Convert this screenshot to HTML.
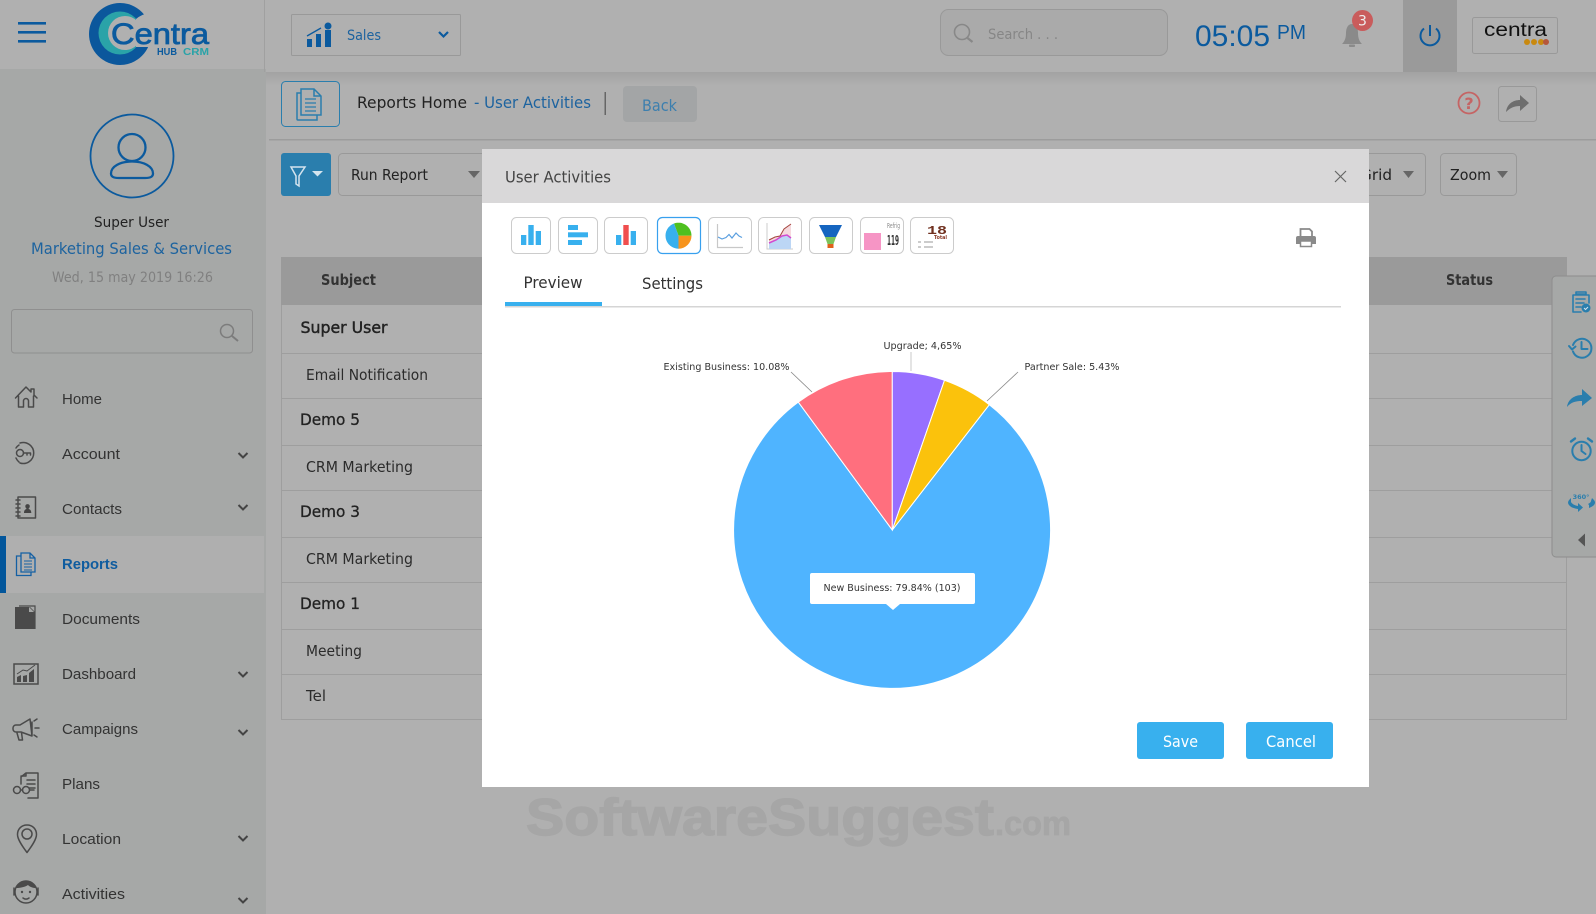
<!DOCTYPE html>
<html lang="en"><head><meta charset="utf-8"><title>Reports - User Activities</title>
<style>
html,body{margin:0;padding:0;background:#b0b0b0;overflow:hidden;width:1596px;height:914px}
svg{display:block}
text{font-family:"DejaVu Sans","Liberation Sans",sans-serif;fill:#2b2b2b}
.m{font-family:"Liberation Sans",sans-serif;font-size:15px;fill:#333}
.ic{fill:none;stroke:#4a4a4a;stroke-width:1.5;stroke-linecap:round;stroke-linejoin:round}
.bl{fill:none;stroke:#2a7ead;stroke-width:2;stroke-linecap:round;stroke-linejoin:round}
.cb{fill:#fff;stroke:#ccc;stroke-width:1}
.lab{font-size:10px;fill:#333}
</style></head>
<body>
<svg width="1596" height="914" viewBox="0 0 1596 914" xmlns="http://www.w3.org/2000/svg">
<defs>
<linearGradient id="sh" x1="0" y1="0" x2="0" y2="1"><stop offset="0" stop-color="#a2a2a2"/><stop offset="1" stop-color="#b0b0b0"/></linearGradient>
</defs>
<rect width="1596" height="914" fill="#b0b0b0"/>

<!-- sidebar -->
<rect x="0" y="69" width="266" height="845" fill="#a6a8a7"/>
<rect x="0" y="0" width="264" height="69" fill="#b0b0b0"/>
<rect x="264" y="0" width="1" height="72" fill="#a0a0a0"/>

<!-- top bar shadow -->
<rect x="266" y="72" width="1330" height="14" fill="url(#sh)"/>

<!-- hamburger -->
<g fill="#0b5a9e"><rect x="18" y="22" width="28" height="2.6"/><rect x="18" y="31" width="28" height="2.6"/><rect x="18" y="40" width="28" height="2.6"/></g>

<!-- logo -->
<circle cx="120" cy="34" r="31" fill="#0b579c"/>
<circle cx="120" cy="33" r="21.5" fill="#2aa3a8"/>
<circle cx="125" cy="33" r="17" fill="#b0b0b0"/>
<path d="M136 19Q142 14 148 13.500Q152 12 156 16L215 18V47H150L136 47z" fill="#b0b0b0"/>
<text x="111" y="44" font-size="30" textLength="98" lengthAdjust="spacingAndGlyphs" style="font-family:'Liberation Sans',sans-serif;fill:#0b5a9e;stroke:#0b5a9e;stroke-width:.8">Centra</text>
<text x="157" y="55" font-size="10" textLength="20" lengthAdjust="spacingAndGlyphs" style="font-family:'Liberation Sans',sans-serif;font-weight:bold;fill:#0b5a9e">HUB</text>
<text x="183" y="55" font-size="10" textLength="26" lengthAdjust="spacingAndGlyphs" style="font-family:'Liberation Sans',sans-serif;font-weight:bold;fill:#2aa3a8">CRM</text>

<!-- sales select -->
<rect x="291.500" y="14.500" width="169" height="41" rx="1" fill="none" stroke="#999"/>
<g fill="#0b5a9e"><rect x="307" y="39" width="5" height="8"/><rect x="316" y="34" width="5" height="13"/><rect x="325" y="30" width="6" height="17"/><circle cx="328" cy="26" r="3.500"/></g>
<path d="M307 36l14-8" fill="none" stroke="#0b5a9e" stroke-width="1.300"/>
<text x="347" y="40" font-size="14" textLength="34" lengthAdjust="spacingAndGlyphs" style="fill:#1d639f">Sales</text>
<path d="M439 32l4.500 4.500 4.500-4.500" fill="none" stroke="#0b5a9e" stroke-width="2.200"/>

<!-- search -->
<rect x="940.500" y="9.500" width="227" height="46" rx="8" fill="#aaa" stroke="#999"/>
<circle cx="962" cy="32" r="7.500" fill="none" stroke="#888" stroke-width="1.600"/>
<path d="M967.500 38l5 4" stroke="#888" stroke-width="2.200"/>
<text x="988" y="39" font-size="14" textLength="70" lengthAdjust="spacingAndGlyphs" style="fill:#868686">Search . . .</text>

<!-- clock -->
<text x="1195" y="46" font-size="30" textLength="75" lengthAdjust="spacingAndGlyphs" style="fill:#0b5a9e;font-family:'Liberation Sans',sans-serif">05:05</text>
<text x="1277" y="39" font-size="20" textLength="29" lengthAdjust="spacingAndGlyphs" style="fill:#0b5a9e;font-family:'Liberation Sans',sans-serif">PM</text>

<!-- bell -->
<path d="M1352 24c4 0 6 4 6 9 0 6 2 9 4 11h-20c2-2 4-5 4-11 0-5 2-9 6-9z" fill="#8a8a8a"/>
<rect x="1349" y="44.500" width="6" height="2.500" rx="1" fill="#8a8a8a"/>
<circle cx="1362.500" cy="20.500" r="10.500" fill="#c95c5c"/>
<text x="1362.500" y="25.500" font-size="14" text-anchor="middle" style="fill:#eee">3</text>

<!-- power -->
<rect x="1403" y="0" width="54" height="72" fill="#9a9a9a"/>
<path d="M1424 28.500a9.500 9.500 0 1 0 12 0" fill="none" stroke="#0b5a9e" stroke-width="2"/>
<path d="M1430 25v11" stroke="#0b5a9e" stroke-width="2"/>

<!-- centra box -->
<rect x="1472.500" y="17.500" width="85" height="36" rx="2" fill="#b0b0b0" stroke="#999"/>
<text x="1484" y="36" font-size="19" textLength="63" lengthAdjust="spacingAndGlyphs" style="fill:#111;font-family:'Liberation Sans',sans-serif">centra</text>
<g fill="#c9890f"><circle cx="1527" cy="42" r="3"/><circle cx="1534" cy="42" r="3"/><circle cx="1541" cy="42" r="3"/></g><circle cx="1546" cy="42" r="3" fill="#b5573c"/>

<!-- breadcrumb row -->
<rect x="281.500" y="81.500" width="58" height="45" rx="4" fill="#b0b0b0" stroke="#2a7ead"/>
<path d="M301 89h13l7 7v19h-20zM314 89v7h7" fill="none" stroke="#2a7ead" stroke-width="1.500"/>
<path d="M301 93h-4v26a1 1 0 0 0 1 1h19v-5" fill="none" stroke="#2a7ead" stroke-width="1.500"/>
<path d="M305 99h11M305 103h11M305 107h11M305 111h11" stroke="#2a7ead" stroke-width="1.300"/>
<text x="357" y="108" font-size="16" textLength="110" lengthAdjust="spacingAndGlyphs" style="fill:#222">Reports Home</text>
<text x="474" y="108" font-size="16" textLength="117" lengthAdjust="spacingAndGlyphs" style="fill:#1d639f">- User Activities</text>
<rect x="604.500" y="92" width="1.500" height="23" fill="#666"/>
<rect x="623" y="86" width="74" height="36" rx="4" fill="#a3a5a6"/>
<text x="642" y="111" font-size="16" textLength="35" lengthAdjust="spacingAndGlyphs" style="fill:#3d7fae">Back</text>

<circle cx="1469" cy="103" r="10.500" fill="none" stroke="#c56464" stroke-width="1.800"/>
<text x="1469" y="109" font-size="16" font-weight="bold" text-anchor="middle" style="fill:#c56464">?</text>
<rect x="1498.500" y="86.500" width="38" height="35" rx="3" fill="#b0b0b0" stroke="#999"/>
<path d="M1506 112c1-8 7-12 14-12v-5l9 8-9 8v-5c-6 0-10 2-14 6z" fill="#6e6e6e"/>

<rect x="269" y="139" width="1327" height="1.500" fill="#9c9c9c"/>

<!-- toolbar -->
<rect x="281" y="153" width="50" height="43" rx="3" fill="#2a7ead"/>
<path d="M291 167h14l-6 9v10l-3-2v-8z" fill="none" stroke="#d4e4ee" stroke-width="1.500"/>
<path d="M312 171h11l-5.500 5.500z" fill="#d4e4ee"/>
<rect x="338.500" y="153.500" width="160" height="42" rx="4" fill="#b0b0b0" stroke="#999"/>
<text x="351" y="180" font-size="15" textLength="77" lengthAdjust="spacingAndGlyphs" style="fill:#222">Run Report</text>
<path d="M468 171h12l-6 7z" fill="#666"/>
<rect x="1340.500" y="153.500" width="85" height="42" rx="4" fill="#b0b0b0" stroke="#999"/>
<text x="1360" y="180" font-size="15" textLength="32" lengthAdjust="spacingAndGlyphs" style="fill:#222">Grid</text>
<path d="M1403 171h11l-5.500 7z" fill="#666"/>
<rect x="1440.500" y="153.500" width="76" height="42" rx="4" fill="#b0b0b0" stroke="#999"/>
<text x="1450" y="180" font-size="15" textLength="41" lengthAdjust="spacingAndGlyphs" style="fill:#222">Zoom</text>
<path d="M1497 171h11l-5.500 7z" fill="#666"/>

<!-- table -->
<rect x="281" y="257" width="1286" height="48" fill="#9a9a9a"/>
<text x="321" y="285" font-size="15" font-weight="bold" textLength="55" lengthAdjust="spacingAndGlyphs" style="fill:#333">Subject</text>
<text x="1446" y="285" font-size="15" font-weight="bold" textLength="47" lengthAdjust="spacingAndGlyphs" style="fill:#333">Status</text>
<g fill="#9e9e9e">
<rect x="281" y="353" width="1286" height="1"/><rect x="281" y="398" width="1286" height="1"/><rect x="281" y="445" width="1286" height="1"/><rect x="281" y="490" width="1286" height="1"/><rect x="281" y="537" width="1286" height="1"/><rect x="281" y="582" width="1286" height="1"/><rect x="281" y="629" width="1286" height="1"/><rect x="281" y="674" width="1286" height="1"/><rect x="281" y="719" width="1286" height="1"/>
<rect x="281" y="305" width="1" height="414"/><rect x="1566" y="305" width="1" height="414"/>
</g>
<text x="300.500" y="333" font-size="16" textLength="87" lengthAdjust="spacingAndGlyphs" style="fill:#222;stroke:#222;stroke-width:.45">Super User</text>
<text x="306" y="380" font-size="15" textLength="122" lengthAdjust="spacingAndGlyphs">Email Notification</text>
<text x="300" y="425" font-size="16" textLength="60" lengthAdjust="spacingAndGlyphs" style="fill:#222;stroke:#222;stroke-width:.3">Demo 5</text>
<text x="306" y="472" font-size="15" textLength="107" lengthAdjust="spacingAndGlyphs">CRM Marketing</text>
<text x="300" y="517" font-size="16" textLength="60" lengthAdjust="spacingAndGlyphs" style="fill:#222;stroke:#222;stroke-width:.3">Demo 3</text>
<text x="306" y="564" font-size="15" textLength="107" lengthAdjust="spacingAndGlyphs">CRM Marketing</text>
<text x="300" y="609" font-size="16" textLength="60" lengthAdjust="spacingAndGlyphs" style="fill:#222;stroke:#222;stroke-width:.3">Demo 1</text>
<text x="306" y="656" font-size="15" textLength="56" lengthAdjust="spacingAndGlyphs">Meeting</text>
<text x="306" y="701" font-size="15" textLength="20" lengthAdjust="spacingAndGlyphs">Tel</text>

<!-- user block -->
<circle cx="132" cy="156" r="41.500" fill="none" stroke="#0b5a9e" stroke-width="1.800"/>
<circle cx="132" cy="147.500" r="13.500" fill="none" stroke="#0b5a9e" stroke-width="2.300"/>
<path d="M132 161.500c-12 0-21 5-21 12 0 4 4 4.500 8 4.500h26c4 0 8-.5 8-4.500 0-7-9-12-21-12z" fill="none" stroke="#0b5a9e" stroke-width="2.300"/>
<text x="94" y="227" font-size="14.500" textLength="75" lengthAdjust="spacingAndGlyphs" style="fill:#222">Super User</text>
<text x="31" y="254" font-size="16" textLength="201" lengthAdjust="spacingAndGlyphs" style="fill:#1d639f">Marketing Sales &amp; Services</text>
<text x="52" y="282" font-size="14" textLength="161" lengthAdjust="spacingAndGlyphs" style="fill:#808080">Wed, 15 may 2019 16:26</text>
<rect x="11.500" y="309.500" width="241" height="43.500" rx="3" fill="#a6a8a7" stroke="#8f8f8f"/>
<circle cx="227" cy="331" r="6.500" fill="none" stroke="#7c7c7c" stroke-width="1.500"/>
<path d="M232 336l6 5" stroke="#7c7c7c" stroke-width="2"/>

<!-- menu -->
<rect x="0" y="536" width="264" height="57" fill="#afafaf"/>
<rect x="0" y="536" width="6" height="57" fill="#02569b"/>
<text class="m" x="62" y="404" textLength="40" lengthAdjust="spacingAndGlyphs">Home</text>
<text class="m" x="62" y="459" textLength="58" lengthAdjust="spacingAndGlyphs">Account</text>
<text class="m" x="62" y="514" textLength="60" lengthAdjust="spacingAndGlyphs">Contacts</text>
<text class="m" x="62" y="569" textLength="56" lengthAdjust="spacingAndGlyphs" style="font-weight:bold;fill:#0f5c9f">Reports</text>
<text class="m" x="62" y="624" textLength="78" lengthAdjust="spacingAndGlyphs">Documents</text>
<text class="m" x="62" y="679" textLength="74" lengthAdjust="spacingAndGlyphs">Dashboard</text>
<text class="m" x="62" y="734" textLength="76" lengthAdjust="spacingAndGlyphs">Campaigns</text>
<text class="m" x="62" y="789" textLength="38" lengthAdjust="spacingAndGlyphs">Plans</text>
<text class="m" x="62" y="844" textLength="59" lengthAdjust="spacingAndGlyphs">Location</text>
<text class="m" x="62" y="899" textLength="63" lengthAdjust="spacingAndGlyphs">Activities</text>
<g fill="none" stroke="#444" stroke-width="2">
<path d="M238.500 453l4.500 4.500 4.500-4.500"/><path d="M238.500 505l4.500 4.500 4.500-4.500"/><path d="M238.500 672l4.500 4.500 4.500-4.500"/><path d="M238.500 730l4.500 4.500 4.500-4.500"/><path d="M238.500 836l4.500 4.500 4.500-4.500"/><path d="M238.500 898l4.500 4.500 4.500-4.500"/>
</g>
<!-- home -->
<path class="ic" d="M15.500 398L26 387l5 5v-3h3v6l3 3M18.500 396v11h5v-6a2.500 2.500 0 0 1 5 0v6h5v-11"/>
<!-- account -->
<path class="ic" d="M20 443a10.500 10.500 0 1 1 0 20"/><path class="ic" d="M16 448a10.500 10.500 0 0 1 3-3M16 458a10.500 10.500 0 0 0 3 4"/>
<circle class="ic" cx="20" cy="453" r="3.500"/><path class="ic" d="M23.500 453h7v2M27 453v2"/>
<!-- contacts -->
<rect class="ic" x="18" y="497" width="17.500" height="21"/><path d="M24 513c0-3 1.500-4 2.800-4-1.200-1-1.500-2-1.500-3a2.300 2.300 0 0 1 4.500 0c0 1-.3 2-1.500 3 1.300 0 3 1 3 4z" fill="#444"/><path class="ic" d="M16 500h4M16 504h4M16 508h4M16 512h4M16 516h4"/>
<!-- reports -->
<path d="M21 553h9l5 5v14H21zM30 553v5h5M21 556h-4.500v19.500H31V572" fill="none" stroke="#1560a3" stroke-width="1.300"/><path d="M24 561h8M24 564h8M24 567h8M24 570h8" stroke="#1560a3" stroke-width="1"/>
<!-- docs -->
<path d="M15 607h15l5 5v17H15z" fill="#4a4a4a"/><path d="M29 607v5h5z" fill="#a6a8a7"/><path d="M19 606h16v23" fill="none" stroke="#4a4a4a" stroke-width="1.200"/>
<!-- dashboard -->
<rect x="14" y="664" width="24" height="20" fill="none" stroke="#4a4a4a" stroke-width="1.500"/>
<path d="M17 682v-5l4-2v7zM23 682v-6l4-1v7zM29 682v-9l5-4v13z" fill="#4a4a4a"/><path d="M17 674l6-4 4 1 8-6" fill="none" stroke="#4a4a4a" stroke-width="1"/>
<!-- campaigns -->
<path class="ic" d="M20 725l10-6 2 17-11-4h-5a3 3 0 0 1-3-3v-1a3 3 0 0 1 3-3zM17 733l2 7h3.500l-1-7.500M32 722v14M34 721l3-2M35 728h4M34 735l3 2"/>
<!-- plans -->
<path class="ic" d="M21 784v-7l5-4h12v25H28M21 776h5v-3M27 780h8M27 784h8M29 788h6"/><circle class="ic" cx="17" cy="790" r="3.500"/><circle class="ic" cx="26" cy="790" r="3.500"/><path class="ic" d="M20.500 790h2M30 790h4"/>
<!-- location -->
<path class="ic" d="M27 825c-5.500 0-9.500 4-9.500 9.500 0 5 5 12 9.500 18 4.500-6 9.500-13 9.500-18 0-5.500-4-9.500-9.500-9.500z"/><circle class="ic" cx="27" cy="834" r="5"/>
<!-- activities -->
<circle class="ic" cx="26" cy="892" r="11"/><path d="M16 888c2-5 6-7 10-7s8 2 10 7c-3 0-6-1-8-3-3 2-8 3-12 3z" fill="#4a4a4a"/><circle cx="22" cy="892" r="1.200" fill="#4a4a4a"/><circle cx="30" cy="892" r="1.200" fill="#4a4a4a"/><path class="ic" d="M23 898c2 1.500 4 1.500 6 0M14 888v7M38 888v7"/>

<!-- right dock -->
<rect x="1552" y="276" width="50" height="281" rx="4" fill="#a6a8a7" stroke="#8d8d8d"/>
<g>
<!-- clipboard-check -->
<path class="bl" style="stroke-width:1.600" d="M1589 303v-8h-3v-1h-10v1h-3v17h8M1576 292h10v3h-10zM1576 299h9M1576 303h8M1576 307h5"/>
<circle cx="1586" cy="308" r="4.500" fill="#2a7ead"/><path d="M1584 308l1.500 1.500 2.500-2.500" fill="none" stroke="#d4e4ee" stroke-width="1"/>
<!-- history -->
<path class="bl" d="M1573 345a9.500 9.500 0 1 1 0 6.500M1581.500 342v7h6M1569 346l3 3.500 3.500-3"/>
<path d="M1567 407c1-8 8-12 15-12v-6l10 9-10 8v-5c-6 0-11 1-15 6z" fill="#2a7ead"/>
<!-- alarm -->
<circle class="bl" cx="1581.500" cy="451" r="9.200"/><path class="bl" d="M1581.500 445v6l4 3"/><path class="bl" style="stroke-width:2.400" d="M1571 441.500l4-3M1592 441.500l-4-3"/>
<!-- 360 -->
<text x="1581" y="499" font-size="6.500" text-anchor="middle" style="fill:#2a7ead;font-weight:bold">360°</text>
<path d="M1571 498c-2 2-3 3-3 5 1 4 6 5.500 10 6v3l5-4.500-5-4.500v3c-3-.5-6-2-7-4zM1592 498c2 2 3 3 3 4.500 0 2-2 4-6 5.500v-3l-1-1c2-1 3-2 3-3z" fill="#2a7ead"/>
<path d="M1585 533.500v13l-7-6.500z" fill="#555"/>
</g>

<!-- watermark -->
<text x="526" y="835" font-size="52" textLength="468" lengthAdjust="spacingAndGlyphs" style="font-family:'Liberation Sans',sans-serif;font-weight:bold;fill:#a6a6a6;stroke:#a6a6a6;stroke-width:1.400">SoftwareSuggest</text>
<text x="995" y="835" font-size="34" textLength="76" lengthAdjust="spacingAndGlyphs" style="font-family:'Liberation Sans',sans-serif;font-weight:bold;fill:#a6a6a6;stroke:#a6a6a6;stroke-width:.8">.com</text>

<!-- modal -->
<rect x="482" y="149" width="887" height="638" fill="#fff"/>
<rect x="482" y="149" width="887" height="54" fill="#d9d8d9"/>
<text x="505" y="182.500" font-size="16" textLength="106" lengthAdjust="spacingAndGlyphs" style="fill:#444">User Activities</text>
<path d="M1335 171l11 11M1346 171l-11 11" stroke="#666" stroke-width="1.200"/>

<!-- chart type icons -->
<rect class="cb" x="511.500" y="217.500" width="39" height="36" rx="5"/>
<g fill="#38b0ee"><rect x="521" y="235" width="5.300" height="10"/><rect x="528.300" y="225" width="5.400" height="20"/><rect x="535.700" y="231" width="5.300" height="14"/></g>
<rect class="cb" x="558.500" y="217.500" width="39" height="36" rx="5"/>
<g fill="#38b0ee"><rect x="568" y="225" width="10" height="5"/><rect x="568" y="232.300" width="20" height="5"/><rect x="568" y="240" width="14" height="5"/></g>
<rect class="cb" x="604.500" y="217.500" width="43" height="36" rx="5"/>
<g fill="#38b0ee"><rect x="616" y="235" width="5.300" height="10"/><rect x="630.700" y="231" width="5.300" height="14"/></g><rect x="623.300" y="225" width="5.400" height="20" fill="#f04e4e"/>
<rect x="657.500" y="217.500" width="43" height="36" rx="5" fill="#fff" stroke="#38a0ee" stroke-width="1.200"/>
<path d="M678.500 235.700L674 223.500A13 13 0 0 1 691.500 235.700z" fill="#4fc01f"/>
<path d="M678.500 235.700H691.500A13 13 0 0 1 678.500 248.700z" fill="#f7941d"/>
<path d="M678.500 235.700V248.700A13 13 0 0 1 674 223.500z" fill="#38b0ee"/>
<rect class="cb" x="708.500" y="217.500" width="43" height="36" rx="5"/>
<path d="M717.500 224v23.500H743" fill="none" stroke="#c8c8c8" stroke-width="1.200"/>
<path d="M718 237l4 2 4-1.500 3-3 3 3.500 4-5 3 3 3 1.500" fill="none" stroke="#5a9fe0" stroke-width="1.200"/>
<rect class="cb" x="758.500" y="217.500" width="43" height="36" rx="5"/>
<path d="M767 223v26h26" fill="none" stroke="#ccc" stroke-width="1"/>
<path d="M769 249v-10l6-2 5-1 4-7 7-5v25z" fill="#f6d9de"/><path d="M769 249v-7l7-2 6-4 5-1 4 3v11z" fill="#bcd6f5"/>
<path d="M769 240l6-3 5-1 4-7 7-5" fill="none" stroke="#a5473f" stroke-width="1"/><path d="M769 243l7-3 6-4 5-1 4 3" fill="none" stroke="#d24ad0" stroke-width="1.500"/>
<rect class="cb" x="809.500" y="217.500" width="43" height="36" rx="5"/>
<path d="M819 225h23l-6 12h-11z" fill="#1565c0"/><path d="M825 237h11l-2.500 7h-6z" fill="#7cc35a"/><path d="M827.500 244h6v4h-6z" fill="#e0611a"/>
<rect class="cb" x="860.500" y="217.500" width="43" height="36" rx="5"/>
<rect x="864" y="233" width="17" height="17" fill="#f695c5"/>
<text x="887" y="228" font-size="7" textLength="13" lengthAdjust="spacingAndGlyphs" style="fill:#888">Refrig</text>
<text x="887" y="245" font-size="13" textLength="12" lengthAdjust="spacingAndGlyphs" style="fill:#333;font-weight:bold">119</text>
<rect class="cb" x="910.500" y="217.500" width="43" height="36" rx="5"/>
<text x="927" y="234" font-size="12" font-weight="bold" textLength="20" lengthAdjust="spacingAndGlyphs" style="font-family:'Liberation Mono',monospace;fill:#70301f">18</text>
<text x="934" y="239" font-size="5" font-weight="bold" textLength="13" lengthAdjust="spacingAndGlyphs" style="fill:#8a3a28">Total</text>
<path d="M918 242h3M924 242h9M918 247h3M924 247h9" stroke="#bbb" stroke-width="1.500"/>

<!-- print -->
<path d="M1300.500 237v-8h9l2.500 2.500V237" fill="none" stroke="#8a8a8a" stroke-width="1.800"/>
<path d="M1296 238a2 2 0 0 1 2-2h16a2 2 0 0 1 2 2v6h-20z" fill="#8a8a8a"/>
<rect x="1300.500" y="241" width="11" height="5.500" fill="#fff" stroke="#8a8a8a" stroke-width="1.500"/>

<!-- tabs -->
<rect x="505" y="306" width="836" height="1.500" fill="#d5d5d5"/>
<rect x="505" y="302" width="97" height="4" fill="#38b0ee"/>
<text x="523.500" y="288" font-size="16" textLength="59" lengthAdjust="spacingAndGlyphs" style="fill:#333">Preview</text>
<text x="642" y="289" font-size="16" textLength="61" lengthAdjust="spacingAndGlyphs" style="fill:#333">Settings</text>

<!-- pie -->
<g stroke="#fff" stroke-width="1" transform="translate(-.7,-1)">
<path d="M893 531L990 405.700A158.500 158.500 0 1 1 799 403.100z" fill="#4fb4ff"/>
<path d="M893 531L799 403.100A158.500 158.500 0 0 1 893 372.500z" fill="#ff6f7e"/>
<path d="M893 531V372.500A158.500 158.500 0 0 1 945.200 381.300z" fill="#976fff"/>
<path d="M893 531L945.200 381.300A158.500 158.500 0 0 1 990 405.700z" fill="#fbc20c"/>
</g>
<path d="M911 352v19" stroke="#c8c8c8"/><path d="M791 372l21 20" stroke="#888" stroke-width=".8"/><path d="M1018 372l-31 29" stroke="#888" stroke-width=".8"/>
<text class="lab" x="883.500" y="349" textLength="78" lengthAdjust="spacingAndGlyphs">Upgrade; 4,65%</text>
<text class="lab" x="663.500" y="370" textLength="126" lengthAdjust="spacingAndGlyphs">Existing Business: 10.08%</text>
<text class="lab" x="1024.500" y="370" textLength="95" lengthAdjust="spacingAndGlyphs">Partner Sale: 5.43%</text>
<rect x="810" y="573" width="165" height="31" rx="2" fill="#fff"/>
<path d="M886 604h14l-7 6z" fill="#fff"/>
<text class="lab" x="823.500" y="591" textLength="137" lengthAdjust="spacingAndGlyphs">New Business: 79.84% (103)</text>

<!-- buttons -->
<rect x="1137" y="722" width="87" height="37" rx="3" fill="#38b0ee"/>
<rect x="1246" y="722" width="87" height="37" rx="3" fill="#38b0ee"/>
<text x="1163" y="747" font-size="16" textLength="35" lengthAdjust="spacingAndGlyphs" style="fill:#fff">Save</text>
<text x="1266" y="747" font-size="16" textLength="50" lengthAdjust="spacingAndGlyphs" style="fill:#fff">Cancel</text>
</svg>
</body></html>
